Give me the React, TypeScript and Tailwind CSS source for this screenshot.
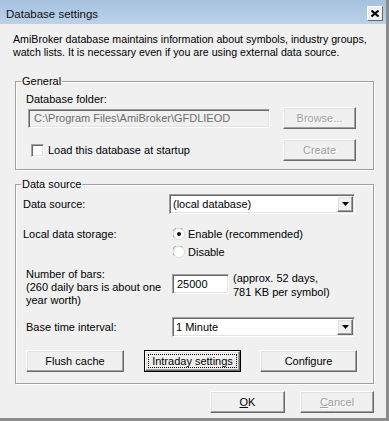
import React from "react";

// classic 3D styles
const raised =
  "border border-t-white border-l-white border-r-[#696969] border-b-[#696969] shadow-[inset_-1px_-1px_0_#a0a0a0,inset_1px_1px_0_#e3e3e3] bg-[#f0f0f0]";
const sunken =
  "border border-t-[#a0a0a0] border-l-[#a0a0a0] border-r-white border-b-white shadow-[inset_1px_1px_0_#696969,inset_-1px_-1px_0_#e3e3e3]";
const etched =
  "border border-[#a0a0a0] shadow-[inset_1px_1px_0_#fff,1px_1px_0_#fff]";

function Btn({
  children,
  className = "",
  disabled = false,
}: {
  children: React.ReactNode;
  className?: string;
  disabled?: boolean;
}) {
  return (
    <div
      className={`${raised} flex items-center justify-center h-[22px] ${
        disabled ? "text-[#a0a0a0] [text-shadow:1px_1px_0_#fff]" : ""
      } ${className}`}>
      {children}
    </div>
  );
}

function Combo({ value, className = "" }: { value: string; className?: string }) {
  return (
    <div className={`${sunken} bg-white h-[20px] flex items-center ${className}`}>
      <span className="flex-1 pl-[3px]">{value}</span>
      <div className={`${raised} w-[16px] h-[16px] mr-[1px] flex items-center justify-center`}>
        <svg width="7" height="4" viewBox="0 0 7 4">
          <path d="M0 0h7L3.5 4z" fill="#000" />
        </svg>
      </div>
    </div>
  );
}

function Radio({ checked, label }: { checked?: boolean; label: string }) {
  return (
    <div className="flex items-center h-[18px]">
      <svg width="12" height="12" viewBox="0 0 12 12">
        <circle cx="6" cy="6" r="5.5" fill="#fff" stroke="#dcdcdc" />
        <path d="M1.2 9.5A5.5 5.5 0 0 1 9.5 1.2" fill="none" stroke="#a0a0a0" />
        {checked && <circle cx="6" cy="6" r="2" fill="#111" />}
      </svg>
      <span className="ml-[3px]">{label}</span>
    </div>
  );
}

export default function App() {
  return (
    <div className="w-[389px] h-[421px] bg-[#f0f0f0] border-r-[3px] border-b-[3px] border-[#8c8c8c] flex flex-col font-['Liberation_Sans',Arial,sans-serif] text-[11px] leading-[13px] text-black">
      {/* Title bar */}
      <div className="h-[24px] shrink-0 flex items-start justify-between bg-gradient-to-b from-[#a5c1df] to-[#bcd2ea]">
        <span className="pl-[6px] pt-[7px] text-[11.5px] leading-[14px] text-[#111]">
          Database settings
        </span>
        <div className="mt-[6px] mr-[3px] w-[16px] h-[15px] flex items-center justify-center bg-[#f0f0f0] border border-t-white border-l-white border-r-[#696969] border-b-[#696969]">
          <svg width="8" height="7" viewBox="0 0 8 7">
            <path d="M0.5 0.5L7.5 6.5M7.5 0.5L0.5 6.5" stroke="#000" strokeWidth="2" />
          </svg>
        </div>
      </div>

      {/* Description */}
      <div className="pl-[13px] mt-[9px] text-[10.65px]">
        <div>AmiBroker database maintains information about symbols, industry groups,</div>
        <div>watch lists. It is necessary even if you are using external data source.</div>
      </div>

      {/* General */}
      <fieldset className={`${etched} ml-[15px] w-[359px] mt-[16px] pb-[8px]`}>
        <legend className="ml-[5px] px-[1px]">General</legend>
        <div className="pl-[10px] mt-[5px]">Database folder:</div>
        <div className="flex items-center mt-[1px]">
          <div className={`${sunken} ml-[12px] w-[242px] h-[19px] flex items-center pl-[5px] text-[#6d6d6d]`}>
            C:\Program Files\AmiBroker\GFDLIEOD
          </div>
          <Btn disabled className="ml-[13px] w-[73px] h-[21px]">
            Browse...
          </Btn>
        </div>
        <div className="flex items-center mt-[10px]">
          <div className={`${sunken} bg-white ml-[15px] w-[13px] h-[13px]`} />
          <span className="ml-[4px]">Load this database at startup</span>
          <Btn disabled className="ml-auto mr-[17px] w-[73px] h-[21px]">
            Create
          </Btn>
        </div>
      </fieldset>

      {/* Data source */}
      <fieldset className={`${etched} ml-[15px] w-[359px] mt-[8px] pb-[11px]`}>
        <legend className="ml-[5px] px-[1px]">Data source</legend>
        <div className="flex items-center mt-[3px]">
          <div className="w-[153px] pl-[7px]">Data source:</div>
          <Combo value="(local database)" className="w-[186px]" />
        </div>
        <div className="flex items-start mt-[11px]">
          <div className="w-[153px] pl-[7px] h-[18px] flex items-center">Local data storage:</div>
          <div className="ml-[4px]">
            <Radio checked label="Enable (recommended)" />
            <Radio label="Disable" />
          </div>
        </div>
        <div className="flex items-start mt-[7px]">
          <div className="w-[156px] pl-[10px]">
            <div>Number of bars:</div>
            <div>(260 daily bars is about one</div>
            <div>year worth)</div>
          </div>
          <div className={`${sunken} bg-white mt-[6px] w-[57px] h-[20px] flex items-center pl-[4px]`}>
            25000
          </div>
          <div className="ml-[4px] mt-[3px] leading-[14px]">
            <div>(approx. 52 days,</div>
            <div>781 KB per symbol)</div>
          </div>
        </div>
        <div className="flex items-center mt-[10px]">
          <div className="w-[156px] pl-[10px]">Base time interval:</div>
          <Combo value="1 Minute" className="w-[183px]" />
        </div>
        <div className="flex mt-[13px]">
          <Btn className="ml-[10px] w-[98px]">Flush cache</Btn>
          <div className="ml-[20px] w-[97px] h-[22px] border border-black">
            <div className={`${raised} h-full p-[2px]`}>
              <div className="h-full border border-dotted border-black flex items-center justify-center">
                Intraday settings
              </div>
            </div>
          </div>
          <Btn className="ml-[19px] w-[97px]">Configure</Btn>
        </div>
      </fieldset>

      {/* Dialog buttons */}
      <div className="flex justify-end mt-[7px] mr-[12px]">
        <Btn className="w-[75px]">
          <span>
            <span className="underline">O</span>K
          </span>
        </Btn>
        <Btn disabled className="ml-[15px] w-[74px]">
          <span>
            <span className="underline">C</span>ancel
          </span>
        </Btn>
      </div>
    </div>
  );
}
